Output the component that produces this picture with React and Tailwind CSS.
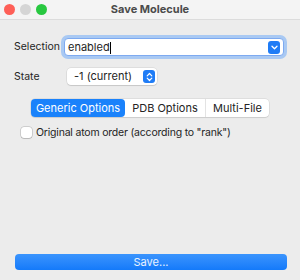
export default function App() {
  return (
    <div
      className="w-[300px] h-[280px] bg-[#ececec] flex flex-col text-[#242424] text-[10.5px] overflow-hidden"
      style={{ fontFamily: '"Inter", "Liberation Sans", sans-serif' }}
    >
      {/* title bar */}
      <div className="h-[20px] bg-[#f4f4f4] border-b border-[#dcdcdc] flex items-center relative shrink-0">
        <div className="flex gap-[5px] pl-[4px]">
          <span className="w-[11px] h-[11px] rounded-full bg-[#fe5f57]" />
          <span className="w-[11px] h-[11px] rounded-full bg-[#d5d5d5]" />
          <span className="w-[11px] h-[11px] rounded-full bg-[#28c840]" />
        </div>
        <div className="absolute inset-0 flex items-center justify-center font-bold text-[11px] text-[#4b4b4b]">
          Save Molecule
        </div>
      </div>

      <div className="flex flex-col flex-1 px-[14px]">
        {/* selection */}
        <div className="flex items-center mt-[18px]">
          <span className="w-[50px]">Selection</span>
          <div className="flex-1 h-[18px] bg-white rounded-[4px] ring-[3px] ring-[#a9c9f3] border border-[#7eaaf0] flex items-center pl-[3px] pr-[3px] mr-[2px]">
            <span className="flex-1 text-[11px]">
              enabled<span className="inline-block w-px h-[12px] bg-black align-middle" />
            </span>
            <span className="w-[12px] h-[13px] rounded-[3px] bg-[#1f7cf6] flex items-center justify-center">
              <svg width="7" height="5" viewBox="0 0 7 5" fill="none">
                <path d="M1 1.2L3.5 3.7L6 1.2" stroke="white" strokeWidth="1.3" strokeLinecap="round" strokeLinejoin="round" />
              </svg>
            </span>
          </div>
        </div>

        {/* state */}
        <div className="flex items-center mt-[12px]">
          <span className="w-[53px]">State</span>
          <div className="w-[90px] h-[17px] bg-white rounded-[4px] shadow-[0_0_0_0.5px_rgba(0,0,0,0.12),0_1px_1px_rgba(0,0,0,0.1)] flex items-center pl-[7px] pr-[2px]">
            <span className="flex-1 text-[11px]">-1 (current)</span>
            <span className="w-[12px] h-[13px] rounded-[3px] bg-[#1f7cf6] flex items-center justify-center">
              <svg width="7" height="10" viewBox="0 0 7 10" fill="none">
                <path d="M1.2 3.8L3.5 1.5L5.8 3.8M1.2 6.2L3.5 8.5L5.8 6.2" stroke="white" strokeWidth="1.2" strokeLinecap="round" strokeLinejoin="round" />
              </svg>
            </span>
          </div>
        </div>

        {/* tabs */}
        <div className="flex justify-center mt-[14px]">
          <div className="flex h-[18px] rounded-[4px] bg-white shadow-[0_0_0_0.5px_rgba(0,0,0,0.12),0_1px_1px_rgba(0,0,0,0.08)] text-[11px]">
            <span className="w-[94px] rounded-[4px] bg-[#1a82fb] text-white flex items-center justify-center">Generic Options</span>
            <span className="w-[81px] flex items-center justify-center border-r border-[#e3e3e3]">PDB Options</span>
            <span className="w-[63px] flex items-center justify-center">Multi-File</span>
          </div>
        </div>

        {/* checkbox */}
        <div className="flex items-center mt-[8px] ml-[7px] gap-[4px]">
          <span className="w-[11px] h-[11px] bg-white rounded-[3px] shadow-[0_0_0_0.5px_rgba(0,0,0,0.25),0_1px_1px_rgba(0,0,0,0.1)]" />
          <span className="text-[10.5px] tracking-[-0.2px]">Original atom order (according to "rank")</span>
        </div>

        <div className="flex-1" />

        {/* save */}
        <div className="h-[16px] mb-[10px] ml-[1px] mr-[-1px] rounded-[4px] bg-gradient-to-b from-[#3a94fd] to-[#137afa] text-white/90 text-[11px] flex items-center justify-center">
          Save...
        </div>
      </div>
    </div>
  );
}
